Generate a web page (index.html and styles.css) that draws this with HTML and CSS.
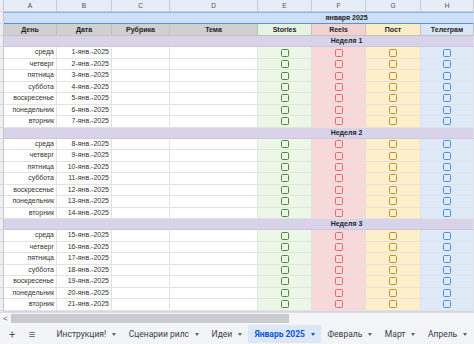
FILE: index.html
```html
<!doctype html>
<html lang="ru">
<head>
    <meta charset="UTF-8">
    <meta name="viewport" content="width=device-width, initial-scale=1.0">
    <title>Контент-план</title>
    <link rel="stylesheet" href="styles.css">
</head>
<body>
<div class="app">
    <div class="sheet">
        <div class="row cols">
            <div class="g"></div><div>A</div><div>B</div><div>C</div><div>D</div><div>E</div><div>F</div><div>G</div><div>H</div>
        </div>
        <div class="row title">
            <div class="g"></div><div class="span">января 2025</div>
        </div>
        <div class="row head">
            <div class="g"></div><div>День</div><div>Дата</div><div>Рубрика</div><div>Тема</div>
            <div class="e">Stories</div><div class="f">Reels</div><div class="y">Пост</div><div class="h">Телеграм</div>
        </div>

        <!-- неделя 1 -->
        <div class="row week"><div class="g"></div><div class="span">Неделя 1</div></div>
        <div class="row"><div class="g"></div><div class="a">среда</div><div class="b">1-янв.-2025</div><div></div><div></div><div class="e"><span class="cb"></span></div><div class="f"><span class="cb"></span></div><div class="y"><span class="cb"></span></div><div class="h"><span class="cb"></span></div></div>
        <div class="row"><div class="g"></div><div class="a">четверг</div><div class="b">2-янв.-2025</div><div></div><div></div><div class="e"><span class="cb"></span></div><div class="f"><span class="cb"></span></div><div class="y"><span class="cb"></span></div><div class="h"><span class="cb"></span></div></div>
        <div class="row"><div class="g"></div><div class="a">пятница</div><div class="b">3-янв.-2025</div><div></div><div></div><div class="e"><span class="cb"></span></div><div class="f"><span class="cb"></span></div><div class="y"><span class="cb"></span></div><div class="h"><span class="cb"></span></div></div>
        <div class="row"><div class="g"></div><div class="a">суббота</div><div class="b">4-янв.-2025</div><div></div><div></div><div class="e"><span class="cb"></span></div><div class="f"><span class="cb"></span></div><div class="y"><span class="cb"></span></div><div class="h"><span class="cb"></span></div></div>
        <div class="row"><div class="g"></div><div class="a">воскресенье</div><div class="b">5-янв.-2025</div><div></div><div></div><div class="e"><span class="cb"></span></div><div class="f"><span class="cb"></span></div><div class="y"><span class="cb"></span></div><div class="h"><span class="cb"></span></div></div>
        <div class="row"><div class="g"></div><div class="a">понедельник</div><div class="b">6-янв.-2025</div><div></div><div></div><div class="e"><span class="cb"></span></div><div class="f"><span class="cb"></span></div><div class="y"><span class="cb"></span></div><div class="h"><span class="cb"></span></div></div>
        <div class="row"><div class="g"></div><div class="a">вторник</div><div class="b">7-янв.-2025</div><div></div><div></div><div class="e"><span class="cb"></span></div><div class="f"><span class="cb"></span></div><div class="y"><span class="cb"></span></div><div class="h"><span class="cb"></span></div></div>

        <!-- неделя 2 -->
        <div class="row week"><div class="g"></div><div class="span">Неделя 2</div></div>
        <div class="row"><div class="g"></div><div class="a">среда</div><div class="b">8-янв.-2025</div><div></div><div></div><div class="e"><span class="cb"></span></div><div class="f"><span class="cb"></span></div><div class="y"><span class="cb"></span></div><div class="h"><span class="cb"></span></div></div>
        <div class="row"><div class="g"></div><div class="a">четверг</div><div class="b">9-янв.-2025</div><div></div><div></div><div class="e"><span class="cb"></span></div><div class="f"><span class="cb"></span></div><div class="y"><span class="cb"></span></div><div class="h"><span class="cb"></span></div></div>
        <div class="row"><div class="g"></div><div class="a">пятница</div><div class="b">10-янв.-2025</div><div></div><div></div><div class="e"><span class="cb"></span></div><div class="f"><span class="cb"></span></div><div class="y"><span class="cb"></span></div><div class="h"><span class="cb"></span></div></div>
        <div class="row"><div class="g"></div><div class="a">суббота</div><div class="b">11-янв.-2025</div><div></div><div></div><div class="e"><span class="cb"></span></div><div class="f"><span class="cb"></span></div><div class="y"><span class="cb"></span></div><div class="h"><span class="cb"></span></div></div>
        <div class="row"><div class="g"></div><div class="a">воскресенье</div><div class="b">12-янв.-2025</div><div></div><div></div><div class="e"><span class="cb"></span></div><div class="f"><span class="cb"></span></div><div class="y"><span class="cb"></span></div><div class="h"><span class="cb"></span></div></div>
        <div class="row"><div class="g"></div><div class="a">понедельник</div><div class="b">13-янв.-2025</div><div></div><div></div><div class="e"><span class="cb"></span></div><div class="f"><span class="cb"></span></div><div class="y"><span class="cb"></span></div><div class="h"><span class="cb"></span></div></div>
        <div class="row"><div class="g"></div><div class="a">вторник</div><div class="b">14-янв.-2025</div><div></div><div></div><div class="e"><span class="cb"></span></div><div class="f"><span class="cb"></span></div><div class="y"><span class="cb"></span></div><div class="h"><span class="cb"></span></div></div>

        <!-- неделя 3 -->
        <div class="row week"><div class="g"></div><div class="span">Неделя 3</div></div>
        <div class="row"><div class="g"></div><div class="a">среда</div><div class="b">15-янв.-2025</div><div></div><div></div><div class="e"><span class="cb"></span></div><div class="f"><span class="cb"></span></div><div class="y"><span class="cb"></span></div><div class="h"><span class="cb"></span></div></div>
        <div class="row"><div class="g"></div><div class="a">четверг</div><div class="b">16-янв.-2025</div><div></div><div></div><div class="e"><span class="cb"></span></div><div class="f"><span class="cb"></span></div><div class="y"><span class="cb"></span></div><div class="h"><span class="cb"></span></div></div>
        <div class="row"><div class="g"></div><div class="a">пятница</div><div class="b">17-янв.-2025</div><div></div><div></div><div class="e"><span class="cb"></span></div><div class="f"><span class="cb"></span></div><div class="y"><span class="cb"></span></div><div class="h"><span class="cb"></span></div></div>
        <div class="row"><div class="g"></div><div class="a">суббота</div><div class="b">18-янв.-2025</div><div></div><div></div><div class="e"><span class="cb"></span></div><div class="f"><span class="cb"></span></div><div class="y"><span class="cb"></span></div><div class="h"><span class="cb"></span></div></div>
        <div class="row"><div class="g"></div><div class="a">воскресенье</div><div class="b">19-янв.-2025</div><div></div><div></div><div class="e"><span class="cb"></span></div><div class="f"><span class="cb"></span></div><div class="y"><span class="cb"></span></div><div class="h"><span class="cb"></span></div></div>
        <div class="row"><div class="g"></div><div class="a">понедельник</div><div class="b">20-янв.-2025</div><div></div><div></div><div class="e"><span class="cb"></span></div><div class="f"><span class="cb"></span></div><div class="y"><span class="cb"></span></div><div class="h"><span class="cb"></span></div></div>
        <div class="row"><div class="g"></div><div class="a">вторник</div><div class="b">21-янв.-2025</div><div></div><div></div><div class="e"><span class="cb"></span></div><div class="f"><span class="cb"></span></div><div class="y"><span class="cb"></span></div><div class="h"><span class="cb"></span></div></div>

        <!-- начало недели 4, остальное под прокруткой -->
        <div class="row week"><div class="g"></div><div class="span"></div></div>
    </div>

    <div class="hscroll">
        <span class="arrow">&lt;</span>
        <div class="thumb"></div>
    </div>

    <div class="tabs">
        <span class="tool plus">+</span>
        <span class="tool menu">&#8801;</span>
        <div class="tab">Инструкция!<i></i></div>
        <div class="tab">Сценарии рилс<i></i></div>
        <div class="tab">Идеи<i></i></div>
        <div class="tab active">Январь 2025<i></i></div>
        <div class="tab">Февраль<i></i></div>
        <div class="tab">Март<i></i></div>
        <div class="tab">Апрель<i></i></div>
    </div>
</div>
</body>
</html>
```

FILE: styles.css
```css
*{
    margin: 0;
    padding: 0;
    box-sizing: border-box;
}
body{
    width: 474px;
    height: 344px;
    overflow: hidden;
    background: #fff;
    font-family: "Liberation Sans", Arial, sans-serif;
    font-size: 7px;
    color: #222;
}
.app{
    display: flex;
    flex-direction: column;
    height: 344px;
}
.sheet{
    height: 312px;
    flex-shrink: 0;
    overflow: hidden;
}
.row{
    display: grid;
    grid-template-columns: 4px 53px 55px 58px 88px 54px 54px 55px 53px;
    height: 11.45px;
    line-height: 10.45px;
}
.row > div{
    border-right: 1px solid #e2e2e2;
    border-bottom: 1px solid #e2e2e2;
    white-space: nowrap;
    overflow: hidden;
}
.row > .g{
    background: #eceef1;
    border-right: 1px solid #c4c7cc;
    border-bottom: 1px solid #d6d8dc;
}

/* буквы столбцов */
.cols{
    height: 12px;
    line-height: 11px;
    background: #e7edf6;
    color: #4a4f57;
    text-align: center;
    font-size: 6.5px;
}
.cols > div{
    border-right: 1px solid #c8ccd3;
    border-bottom: 1px solid #c8ccd3;
}

/* заголовок месяца */
.title{
    height: 12px;
    line-height: 10px;
}
.title .span{
    grid-column: 2 / -1;
    background: #cddff7;
    border-top: 1px solid #93b4e6;
    border-bottom: 1px solid #5b8ed8;
    font-weight: bold;
    text-align: center;
    padding-left: 216px;
}

.head{
    height: 12px;
    line-height: 11px;
    font-weight: bold;
    text-align: center;
    background: #d0d0d0;
}
.head > div{
    border-right: 1px solid #c2c2c2;
    border-bottom: 1px solid #c2c2c2;
}

.week .span{
    grid-column: 2 / -1;
    background: #d9d3e9;
    border-bottom: 1px solid #cdc6e0;
    font-weight: bold;
    text-align: center;
    padding-left: 216px;
}

.a, .b{
    text-align: right;
    padding-right: 2px;
    color: #333;
}

.row .e{ background: #ecf7e7; }
.row .f{ background: #f8d8d8; }
.row .y{ background: #fdefca; }
.row .h{ background: #dfeaf8; }
.head .e{ background: #e6f3df; }
.head .f{ background: #f5d2d2; }
.head .y{ background: #fcecc5; }
.head .h{ background: #dae6f6; }

.row .e, .row .f, .row .y, .row .h{
    display: flex;
    align-items: center;
    justify-content: center;
}
.head .e, .head .f, .head .y, .head .h{
    display: block;
}

.cb{
    display: block;
    width: 8px;
    height: 8px;
    border: 1.5px solid;
    border-radius: 1.5px;
}
.e .cb{ border-color: #4b8b35; }
.f .cb{ border-color: #e06a6e; }
.y .cb{ border-color: #b99232; }
.h .cb{ border-color: #4a8fde; }

/* горизонтальная прокрутка */
.hscroll{
    position: relative;
    height: 12px;
    flex-shrink: 0;
    background: #f4f5f7;
    border-top: 1px solid #dcdde0;
}
.hscroll .arrow{
    position: absolute;
    left: 3px;
    top: 1px;
    font-size: 8px;
    line-height: 9px;
    color: #555;
}
.hscroll .thumb{
    position: absolute;
    left: 11px;
    top: 1px;
    width: 278px;
    height: 9px;
    background: #c9cacc;
}

/* вкладки листов */
.tabs{
    flex: 1;
    display: flex;
    align-items: center;
    background: #f2f4f7;
    font-family: Roboto, "Liberation Sans", sans-serif;
    font-size: 8.5px;
    color: #3c4043;
}
.tool{
    flex-shrink: 0;
    width: 20px;
    text-align: center;
    font-size: 11px;
    color: #555;
}
.plus{
    margin-left: 2px;
}
.menu{
    margin-right: 8px;
}
.tab{
    flex-shrink: 0;
    display: flex;
    align-items: center;
    gap: 5.5px;
    height: 18px;
    padding: 0 6.5px;
    white-space: nowrap;
}
.tab i{
    width: 0;
    height: 0;
    border-left: 2.5px solid transparent;
    border-right: 2.5px solid transparent;
    border-top: 3px solid #5f6368;
}
.tab.active{
    background: #dde7f8;
    color: #0b57d0;
    font-weight: bold;
}
.tab.active i{
    border-top-color: #0b57d0;
}
```
